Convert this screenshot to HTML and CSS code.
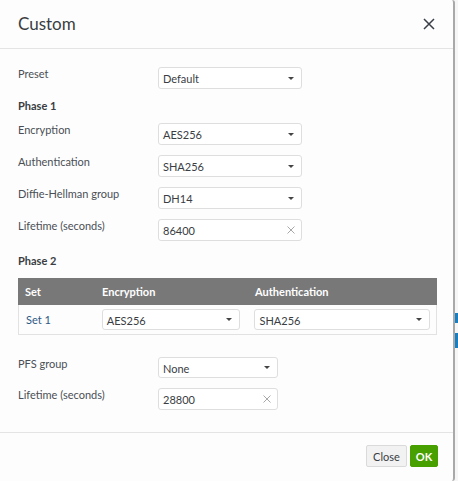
FILE: index.html
```html
<!DOCTYPE html>
<html>
<head>
<meta charset="utf-8">
<link rel="stylesheet" href="styles.css">
</head>
<body>
<div class="page">
  <div class="dialog">
    <div class="header">
      <span class="title">Custom</span>
      <svg class="close-icon" width="12" height="12" viewBox="0 0 12 12"><path d="M1 1L11 11M11 1L1 11" stroke="#3a3f47" stroke-width="1.5" fill="none"/></svg>
    </div>
    <div class="body">
      <div class="row">
        <span class="label">Preset</span>
        <div class="select w144"><span>Default</span><i class="caret"></i></div>
      </div>
      <div class="heading">Phase 1</div>
      <div class="row">
        <span class="label">Encryption</span>
        <div class="select w144"><span>AES256</span><i class="caret"></i></div>
      </div>
      <div class="row">
        <span class="label">Authentication</span>
        <div class="select w144"><span>SHA256</span><i class="caret"></i></div>
      </div>
      <div class="row">
        <span class="label">Diffie-Hellman group</span>
        <div class="select w144"><span>DH14</span><i class="caret"></i></div>
      </div>
      <div class="row">
        <span class="label">Lifetime (seconds)</span>
        <div class="select w144"><span>86400</span><svg class="clear" width="8" height="8" viewBox="0 0 8 8"><path d="M0.5 0.5L7.5 7.5M7.5 0.5L0.5 7.5" stroke="#a8a8a8" stroke-width="1" fill="none"/></svg></div>
      </div>
      <div class="heading h2">Phase 2</div>
      <div class="table">
        <div class="thead">
          <div class="c1">Set</div>
          <div class="c2">Encryption</div>
          <div class="c3">Authentication</div>
        </div>
        <div class="trow">
          <div class="c1 setname">Set 1</div>
          <div class="c2"><div class="select tsel"><span>AES256</span><i class="caret"></i></div></div>
          <div class="c3"><div class="select tsel"><span>SHA256</span><i class="caret"></i></div></div>
        </div>
      </div>
      <div class="row pfs">
        <span class="label">PFS group</span>
        <div class="select w120 h20"><span>None</span><i class="caret"></i></div>
      </div>
      <div class="row">
        <span class="label">Lifetime (seconds)</span>
        <div class="select w120"><span>28800</span><svg class="clear" width="8" height="8" viewBox="0 0 8 8"><path d="M0.5 0.5L7.5 7.5M7.5 0.5L0.5 7.5" stroke="#a8a8a8" stroke-width="1" fill="none"/></svg></div>
      </div>
    </div>
    <div class="footer">
      <button class="btn btn-close">Close</button>
      <button class="btn btn-ok">OK</button>
    </div>
  </div>
  <div class="backdrop">
    <div class="blue b1"></div>
    <div class="blue b2"></div>
  </div>
</div>
</body>
</html>
```
FILE: styles.css
```css
html, body {
  margin: 0;
  padding: 0;
}
body {
  background: #f4f4f4;
  font-family: Lato, "Open Sans", sans-serif;
  color: #444a52;
  font-size: 11px;
}
.page {
  display: flex;
  width: 458px;
  height: 481px;
  overflow: hidden;
}
.dialog {
  width: 453px;
  height: 481px;
  flex: none;
  background: #fdfdfd;
  border-right: 2px solid #a9a9a9;
  border-radius: 0 3px 3px 0;
  display: flex;
  flex-direction: column;
}
.header {
  height: 48px;
  flex: none;
  border-bottom: 1px solid #e4e4e4;
  display: flex;
  align-items: center;
  justify-content: space-between;
  padding: 0 18px 0 18px;
}
.title {
  font-size: 17px;
  color: #3a3d42;
  margin-top: -1px;
}
.close-icon {
  margin-top: -1px;
}
.body {
  padding: 18px 16px 0 18px;
  flex: 1;
}
.row {
  display: flex;
  align-items: flex-start;
  margin-bottom: 10px;
}
.label {
  width: 140px;
  flex: none;
  line-height: 14px;
  color: #4a4f56;
}
.select {
  box-sizing: border-box;
  height: 22px;
  border: 1px solid #dedede;
  border-radius: 3px;
  background: #fff;
  display: flex;
  align-items: center;
  justify-content: space-between;
  padding: 0 7px 0 4px;
  color: #3a3d42;
  font-size: 11px;
}
.select span {
  margin-top: 1px;
}
.w144 { width: 144px; }
.w120 { width: 120px; }
.h20 { height: 21px; }
.caret {
  width: 0;
  height: 0;
  border-left: 3px solid transparent;
  border-right: 3px solid transparent;
  border-top: 3px solid #444;
}
.clear {
  margin-right: -1px;
}
.heading {
  font-weight: bold;
  line-height: 14px;
  margin-bottom: 10px;
  color: #3a3d42;
}
.heading.h2 {
  margin-top: 13px;
}
.table {
  width: 419px;
  margin-bottom: 22px;
}
.thead, .trow {
  display: flex;
  align-items: center;
}
.thead {
  height: 27px;
  background: #787878;
  color: #fff;
  font-weight: bold;
}
.trow {
  height: 30px;
  box-sizing: border-box;
  border: 1px solid #e2e2e2;
  border-top: none;
}
.c1 { width: 77px; padding-left: 7px; box-sizing: border-box; }
.c2 { width: 153px; padding: 0 7px; box-sizing: border-box; }
.c3 { width: 189px; padding: 0 6px 0 7px; box-sizing: border-box; }
.trow .c1 { width: 76px; }
.setname { color: #2f5a85; }
.tsel { height: 21px; width: 100%; }
.footer {
  box-sizing: border-box;
  height: 49px;
  flex: none;
  border-top: 1px solid #e4e4e4;
  display: flex;
  justify-content: flex-end;
  align-items: flex-start;
  padding: 12px 15px 0 0;
  gap: 3px;
}
.btn {
  height: 22px;
  font-family: Lato, "Open Sans", sans-serif;
  font-size: 11px;
  border-radius: 2px;
  padding: 0;
  cursor: pointer;
}
.btn-close {
  width: 41px;
  background: #f2f2f2;
  border: 1px solid #dadada;
  color: #3a3d42;
}
.btn-ok {
  width: 28px;
  background: #47a000;
  border: 1px solid #47a000;
  color: #fff;
  font-weight: bold;
}
.backdrop {
  flex: 1;
  background: #f6f6f6;
  display: flex;
  flex-direction: column;
}
.blue {
  background: #1a7fc0;
}
.b1 { margin-top: 313px; height: 10px; }
.b2 { margin-top: 10px; height: 15px; }
```
